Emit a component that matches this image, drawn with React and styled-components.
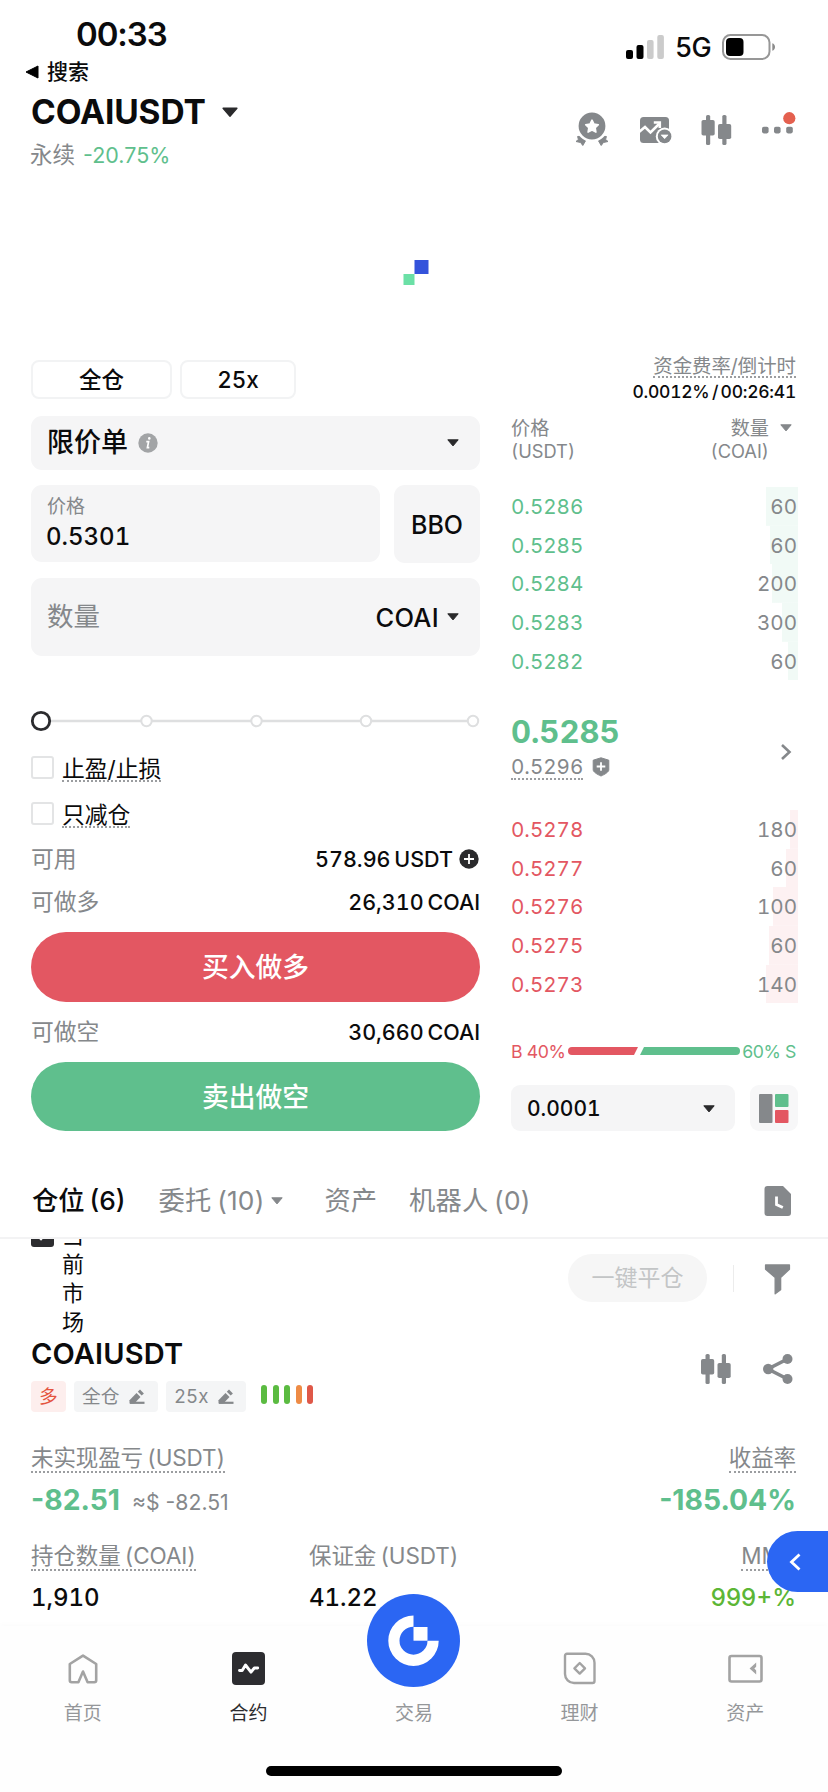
import React from 'react';
import styled, { createGlobalStyle, css } from 'styled-components';

const GREEN = '#5fbf8d';
const RED = '#e35762';
const GRAY = '#85888b';
const PANEL = '#f5f5f6';

const GlobalStyle = createGlobalStyle`
  * { box-sizing: border-box; }
  html, body { margin: 0; padding: 0; background: #fff; }
  body {
    font-family: Inter, "Noto Sans CJK SC", sans-serif;
    font-variant-numeric: tabular-nums;
    color: #0b0b0c;
    white-space: nowrap;
    word-spacing: -2px;
  }
  svg { display: block; flex: none; overflow: visible; }
`;

const Screen = styled.main`
  position: relative;
  width: 828px;
  height: 1792px;
  overflow: hidden;
  background: #fff;
  display: flex;
  flex-direction: column;
`;

/* ---------- status bar ---------- */
const StatusBar = styled.div`
  height: 60px;
  flex: none;
  display: flex;
  justify-content: space-between;
  align-items: flex-start;
  padding: 14px 52px 0 76px;
`;
const Clock = styled.div`
  font-size: 33px;
  font-weight: 600;
  line-height: 40px;
  letter-spacing: -1.1px;
  font-variant-numeric: normal;
`;
const StatusRight = styled.div`
  display: flex;
  align-items: center;
  height: 26px;
  margin-top: 20px;
`;
const Network = styled.span`
  font-size: 27px;
  font-weight: 500;
  line-height: 26px;
  margin: 2px 11px 0 10px;
  letter-spacing: -0.8px;
`;
const BackLink = styled.div`
  height: 24px;
  flex: none;
  padding-left: 25px;
  display: flex;
  align-items: center;
  gap: 8px;
  font-size: 21px;
  font-weight: 500;
  line-height: 24px;
`;

/* ---------- header ---------- */
const Header = styled.header`
  height: 96px;
  flex: none;
  display: flex;
  justify-content: space-between;
  padding: 7px 31px 0 31px;
`;
const PairTitle = styled.h1`
  margin: 0;
  height: 42px;
  line-height: 42px;
  font-size: 33.5px;
  font-weight: 700;
  letter-spacing: -0.1px;
  display: flex;
  align-items: center;
  gap: 16px;
`;
const PairSub = styled.div`
  margin: 8px 0 0 -1px;
  line-height: 28px;
  font-size: 22.5px;
  color: ${GRAY};
  display: flex;
  gap: 8px;
`;
const Change = styled.span`
  color: ${GREEN};
  font-size: 21.5px;
  font-variant-numeric: normal;
`;
const HeaderIcons = styled.div`
  display: flex;
  gap: 26px;
  height: 36px;
  margin-top: 19px;
`;

const ChartLoading = styled.div`
  height: 162px;
  flex: none;
  display: flex;
  justify-content: center;
  padding: 80px 0 0 3px;
`;

/* ---------- trade panel ---------- */
const Trade = styled.section`
  height: 789px;
  flex: none;
  display: grid;
  grid-template-columns: 449px 1fr;
  column-gap: 31px;
  padding: 0 32px 0 31px;
`;
const OrderForm = styled.div`
  padding-top: 18px;
`;
const MarginRow = styled.div`
  display: flex;
  gap: 8px;
`;
const OutlineButton = styled.div`
  width: ${(p) => p.$w}px;
  height: 39px;
  border: 2px solid #f2f3f4;
  border-radius: 8px;
  font-size: 22.5px;
  font-weight: 500;
  line-height: 36px;
  text-align: center;
`;
const Field = styled.div`
  height: ${(p) => p.$h}px;
  border-radius: 11px;
  background: ${PANEL};
  display: flex;
  align-items: center;
  padding: 0 21px 0 16px;
  flex: ${(p) => (p.$grow ? 1 : 'none')};
  margin-top: ${(p) => p.$mt || 0}px;
`;
const FieldRow = styled.div`
  display: flex;
  gap: 14px;
  margin-top: 15px;
`;
const OrderType = styled.span`
  font-size: 27px;
  font-weight: 500;
  line-height: 36px;
  margin-right: 10px;
`;
const Push = styled.span`
  flex: 1;
`;
const PriceStack = styled.div`
  display: flex;
  flex-direction: column;
`;
const PriceLabel = styled.span`
  font-size: 19px;
  line-height: 26px;
  color: ${GRAY};
`;
const PriceValue = styled.span`
  font-size: 24px;
  font-weight: 500;
  line-height: 33px;
  margin-left: -1px;
`;
const BboButton = styled.div`
  width: 86px;
  height: 78px;
  border-radius: 11px;
  background: ${PANEL};
  font-size: 25px;
  font-weight: 500;
  line-height: 80px;
  text-align: center;
`;
const Placeholder = styled.span`
  font-size: 26.5px;
  line-height: 36px;
  margin-bottom: 2px;
  color: ${GRAY};
`;
const Unit = styled.span`
  font-size: 25.5px;
  font-weight: 500;
  letter-spacing: 0.3px;
  margin-right: 8px;
`;
const Slider = styled.div`
  margin-top: 54px;
  height: 22px;
`;
const CheckRow = styled.div`
  display: flex;
  height: 26px;
  margin-top: ${(p) => p.$mt}px;
  gap: 8px;
`;
const CheckBox = styled.span`
  width: 23px;
  height: 23px;
  border: 2px solid #e3e4e5;
  border-radius: 3px;
`;
const dotted = css`
  border-bottom: 2px dotted #9b9da0;
`;
const CheckLabel = styled.span`
  font-size: 22.8px;
  line-height: 25px;
  height: 26px;
  ${dotted}
`;
const InfoRow = styled.div`
  display: flex;
  align-items: center;
  height: 32px;
  margin-top: ${(p) => p.$mt}px;
  font-size: 21.5px;
  font-weight: 500;
`;
const InfoLabel = styled.span`
  flex: 1;
  font-size: 22.8px;
  line-height: 30px;
  font-weight: 400;
  color: ${GRAY};
`;
const ActionButton = styled.div`
  height: ${(p) => p.$h}px;
  margin-top: 14px;
  border-radius: 35px;
  background: ${(p) => p.$bg};
  color: #fff;
  font-size: 26.8px;
  font-weight: 500;
  line-height: 70px;
  text-align: center;
`;

/* ---------- order book ---------- */
const Book = styled.div`
  padding-top: 14px;
  display: flex;
  flex-direction: column;
`;
const Funding = styled.div`
  align-self: flex-end;
  height: 22px;
  font-size: 19.4px;
  line-height: 21px;
  color: ${GRAY};
  ${dotted}
`;
const FundingValue = styled.div`
  align-self: flex-end;
  height: 22px;
  margin-top: 3px;
  font-size: 17.5px;
  font-weight: 500;
  line-height: 22px;
  letter-spacing: -0.25px;
`;
const BookHead = styled.div`
  display: flex;
  margin-top: 13px;
  height: 49px;
  line-height: 24px;
  color: ${GRAY};
`;
const HeadCell = styled.div`
  text-align: ${(p) => (p.$right ? 'right' : 'left')};
  flex: ${(p) => (p.$right ? 'none' : 1)};
`;
const HeadLine = styled.div`
  height: 24px;
  font-size: ${(p) => (p.$cjk ? 19.2 : 18.3)}px;
  line-height: ${(p) => (p.$cjk ? 24 : 23)}px;
`;
const HeadCaret = styled.div`
  padding: 8px 4px 0 11px;
`;
const Levels = styled.div`
  margin: ${(p) => p.$mt}px -2px 0 0;
`;
const Level = styled.div`
  height: 38.7px;
  line-height: 39.5px;
  padding-right: 1px;
  display: flex;
  justify-content: space-between;
  font-size: 20.6px;
  color: ${GRAY};
  background: linear-gradient(${(p) => p.$tint}, ${(p) => p.$tint}) no-repeat right / ${(p) => p.$depth}px 100%;
`;
const LevelPrice = styled.span`
  color: ${(p) => p.$color};
`;
const Mid = styled.div`
  height: 129.5px;
  padding: 33px 4px 0 0;
  display: flex;
  justify-content: space-between;
`;
const LastPrice = styled.div`
  font-size: 31px;
  font-weight: 700;
  line-height: 38px;
  color: ${GREEN};
`;
const MarkRow = styled.div`
  display: flex;
  gap: 9px;
  margin-top: 3px;
`;
const MarkPrice = styled.span`
  font-size: 20.6px;
  line-height: 25px;
  height: 26px;
  color: ${GRAY};
  ${dotted}
`;
const Shield = styled.span`
  padding-top: 3px;
`;
const MidArrow = styled.div`
  padding-top: 30px;
`;
const Ratio = styled.div`
  display: flex;
  align-items: center;
  justify-content: space-between;
  height: 24px;
  margin-top: 36px;
  font-size: 17.7px;
  letter-spacing: -0.4px;
  word-spacing: 0;
  font-variant-numeric: normal;
`;
const RatioText = styled.span`
  color: ${(p) => p.$color};
`;
const BookFoot = styled.div`
  display: flex;
  gap: 15px;
  margin: 22px -2px 0 0;
`;
const StepSelect = styled.div`
  width: 224px;
  height: 46px;
  border-radius: 9px;
  background: ${PANEL};
  display: flex;
  align-items: center;
  padding: 1px 20px 0 16px;
  font-size: 21px;
  font-weight: 500;
`;
const LayoutButton = styled.div`
  width: 48px;
  height: 46px;
  border-radius: 9px;
  background: #f7f7f8;
  padding: 9px 0 0 9px;
`;

/* ---------- tabs ---------- */
const Tabs = styled.nav`
  height: 108px;
  flex: none;
  padding: 34px 36px 0 32px;
  border-bottom: 2px solid #f3f3f4;
  display: flex;
  align-items: center;
`;
const Tab = styled.span`
  font-size: 26.3px;
  line-height: 36px;
  margin-bottom: 1px;
  font-weight: ${(p) => (p.$active ? 500 : 400)};
  color: ${(p) => (p.$active ? '#0b0b0c' : GRAY)};
  margin-right: ${(p) => p.$mr || 0}px;
  font-variant-numeric: normal;
  letter-spacing: ${(p) => p.$ls || 0}px;
  display: flex;
  align-items: center;
  gap: 7px;
`;

/* ---------- positions ---------- */
const Positions = styled.section`
  height: 387px;
  flex: none;
  overflow: hidden;
  padding: 0 32px 0 31px;
`;
const FilterRow = styled.div`
  height: 98px;
  overflow: hidden;
  display: flex;
`;
const MarketToggle = styled.div`
  display: flex;
  flex: 1;
  gap: 8px;
  margin-top: -18px;
`;
const CheckedBox = styled.span`
  width: 23px;
  height: 23px;
  margin-top: 3px;
  border-radius: 3px;
  background: #2c2c2f;
  padding: 4px 0 0 3px;
`;
const MarketLabel = styled.span`
  width: 23px;
  font-size: 22px;
  line-height: 29px;
  white-space: normal;
  word-break: break-all;
`;
const CloseAll = styled.div`
  width: 139px;
  height: 48px;
  margin-top: 15px;
  border-radius: 24px;
  background: #f6f6f6;
  color: #c3c5c6;
  font-size: 23px;
  line-height: 48px;
  text-align: center;
`;
const Divider = styled.span`
  width: 1px;
  height: 27px;
  margin: 26px 30px 0 26px;
  background: #ececec;
`;
const FunnelWrap = styled.div`
  padding: 25px 5px 0 0;
`;
const PositionHead = styled.div`
  display: flex;
  justify-content: space-between;
  height: 75px;
`;
const Symbol = styled.h2`
  margin: 0;
  font-size: 29px;
  font-weight: 600;
  line-height: 33px;
  height: 34px;
  letter-spacing: 0.15px;
`;
const Tags = styled.div`
  display: flex;
  gap: 8px;
  margin-top: 10px;
  height: 31px;
`;
const Tag = styled.span`
  width: ${(p) => p.$w}px;
  height: 31px;
  border-radius: 4px;
  background: ${(p) => (p.$long ? '#fdeeed' : '#f4f5f6')};
  color: ${(p) => (p.$long ? '#e4543f' : GRAY)};
  font-size: 18.7px;
  line-height: 31px;
  display: flex;
  align-items: center;
  padding-left: 8px;
  gap: 10px;
`;
const RiskBars = styled.span`
  display: flex;
  gap: 5.6px;
  padding: 4px 0 0 7px;
`;
const RiskBar = styled.i`
  width: 6px;
  height: 19px;
  border-radius: 3px;
  background: ${(p) => p.$c};
`;
const PositionIcons = styled.div`
  display: flex;
  gap: 32px;
  padding: 17px 3px 0 0;
`;
const Stats = styled.div`
  display: flex;
  justify-content: space-between;
  margin-top: ${(p) => p.$mt}px;
`;
const Stat = styled.div`
  display: flex;
  flex-direction: column;
  align-items: ${(p) => (p.$right ? 'flex-end' : 'flex-start')};
  width: ${(p) => (p.$w ? p.$w + 'px' : 'auto')};
  flex: ${(p) => (p.$grow ? 1 : 'none')};
`;
const StatLabel = styled.span`
  font-size: 22.5px;
  line-height: 26px;
  height: 28px;
  color: ${GRAY};
  letter-spacing: -0.1px;
  border-bottom: 2px dotted ${(p) => (p.$plain ? 'transparent' : '#9b9da0')};
`;
const Pnl = styled.div`
  display: flex;
  align-items: baseline;
  gap: 12px;
  height: 34px;
  margin-top: 10px;
  font-size: 28.3px;
  font-weight: 700;
  line-height: 34px;
  font-variant-numeric: normal;
  color: ${GREEN};
`;
const PnlApprox = styled.span`
  font-size: 21.2px;
  font-weight: 400;
  word-spacing: 0;
  color: ${GRAY};
`;
const StatValue = styled.span`
  font-size: 24px;
  font-weight: 500;
  line-height: 30px;
  margin-top: 12px;
  color: ${(p) => p.$color || '#0b0b0c'};
  font-variant-numeric: ${(p) => (p.$color ? 'normal' : 'tabular-nums')};
`;

const SideTab = styled.div`
  position: absolute;
  right: 0;
  top: 1531px;
  width: 61px;
  height: 61px;
  border-radius: 31px 0 0 31px;
  background: #2b66f3;
  padding: 22px 0 0 21px;
`;

/* ---------- bottom nav ---------- */
const BottomNav = styled.nav`
  height: 166px;
  flex: none;
  background: #fefefe;
  box-shadow: 0 -1px 6px rgba(0, 0, 0, 0.025);
  position: relative;
  display: flex;
  flex-direction: column;
  align-items: center;
`;
const NavItems = styled.div`
  width: 100%;
  height: 140px;
  display: grid;
  grid-template-columns: repeat(5, 1fr);
`;
const NavItem = styled.div`
  display: flex;
  flex-direction: column;
  align-items: center;
  font-size: 19px;
  color: ${(p) => (p.$active ? '#2c2c2f' : '#95979a')};
`;
const NavIcon = styled.div`
  height: 75px;
  display: flex;
  align-items: flex-end;
  padding-bottom: ${(p) => (p.$big ? 14 : 16.5)}px;
`;
const TradeButton = styled.div`
  width: 93px;
  height: 93px;
  border-radius: 50%;
  background: #2b66f3;
  flex: none;
`;
const NavText = styled.span`
  line-height: 26px;
`;
const HomeIndicator = styled.div`
  width: 296px;
  height: 10px;
  border-radius: 5px;
  background: #000;
`;

/* ---------- icons ---------- */
const Caret = ({ w = 12, h = 8, color = '#2a2a2c' }) => (
  <svg width={w} height={h} viewBox="0 0 12 8">
    <path d="M.8.8h10.4L6 6.9z" fill={color} stroke={color} strokeLinejoin="round" />
  </svg>
);

const SignalIcon = () => (
  <svg width="39" height="26" viewBox="0 0 39 26">
    <rect x="0" y="16" width="7" height="9" rx="2" fill="#000" />
    <rect x="10.5" y="11" width="7" height="14" rx="2" fill="#000" />
    <rect x="21" y="6" width="6.6" height="19" rx="2" fill="#cbcbcb" />
    <rect x="31.3" y="1" width="6.6" height="24" rx="2" fill="#cbcbcb" />
  </svg>
);

const BatteryIcon = () => (
  <svg width="54" height="26" viewBox="0 0 54 26">
    <rect x="1" y="1" width="46.5" height="24" rx="7.5" fill="none" stroke="#979797" strokeWidth="2" />
    <rect x="4" y="4" width="17.5" height="18" rx="4" fill="#000" />
    <path d="M50.3 9.2c3.6 1.2 3.6 6.4 0 7.6z" fill="#8b8b8b" />
  </svg>
);

const MedalIcon = () => (
  <svg width="34" height="36" viewBox="0 0 34 36">
    <path d="M2.6 26.5l4-.3 4 4.5-2.8 4.8-2.2-3-4.6-1 2.4-2z" fill={GRAY} stroke={GRAY} strokeLinejoin="round" />
    <path d="M31.4 26.5l-4-.3-4 4.5 2.8 4.8 2.2-3 4.6-1-2.4-2z" fill={GRAY} stroke={GRAY} strokeLinejoin="round" />
    <circle cx="17" cy="16" r="14.7" fill={GRAY} stroke="#fff" strokeWidth="2.6" />
    <path
      d="M17 10.2l2 3.9 4.3.6-3.1 3.1.7 4.3-3.9-2-3.9 2 .7-4.3-3.1-3.1 4.3-.6z"
      fill="#fff" stroke="#fff" strokeWidth="1.6" strokeLinejoin="round"
    />
  </svg>
);

const ChartIcon = () => (
  <svg width="34" height="36" viewBox="0 0 34 36">
    <rect x="1" y="7" width="29" height="26" rx="3.5" fill={GRAY} />
    <path d="M0 22l6-5 5.5 5.5 8.5-8.500" fill="none" stroke="#fff" strokeWidth="2.6" />
    <path d="M14.8 12.5h6v5.500" fill="none" stroke="#fff" strokeWidth="2.6" />
    <circle cx="25.6" cy="26.4" r="8.8" fill="#fff" />
    <circle cx="25.6" cy="26.4" r="6.8" fill={GRAY} />
    <path d="M22.1 24.9h7l-3.5 3.800z" fill="#fff" stroke="#fff" strokeWidth=".6" strokeLinejoin="round" />
  </svg>
);

const CandlesIcon = () => (
  <svg width="30" height="30" viewBox="0 0 30 30" fill={GRAY}>
    <rect x="4.5" y="0" width="4.2" height="30" rx="1.6" />
    <rect x="0" y="5" width="13.2" height="15.5" rx="1.8" />
    <rect x="20.8" y="0" width="4.2" height="30" rx="1.6" />
    <rect x="16.5" y="9" width="13.2" height="15" rx="1.8" />
  </svg>
);

const MoreIcon = () => (
  <svg width="36" height="36" viewBox="0 0 36 36" fill={GRAY}>
    <rect x="1" y="16.8" width="6.6" height="6.6" rx="1.8" />
    <rect x="13" y="16.8" width="6.6" height="6.6" rx="1.8" />
    <rect x="25.2" y="16.8" width="6.6" height="6.6" rx="1.8" />
    <circle cx="28.3" cy="8.2" r="6.1" fill="#e4604f" />
  </svg>
);

const InfoIcon = () => (
  <svg width="20" height="20" viewBox="0 0 20 20">
    <circle cx="10" cy="10" r="9.7" fill="#a2a4a6" />
    <circle cx="11.3" cy="5.4" r="1.3" fill="#fff" />
    <path d="M8.3 8.7h2.3L9.4 14.6h1.9" fill="none" stroke="#fff" strokeWidth="1.7" />
  </svg>
);

const SliderTrack = () => (
  <svg width="449" height="22" viewBox="0 0 449 22">
    <path d="M20 11h423" stroke="#dedfe0" strokeWidth="2.5" />
    {[115.5, 225.5, 335, 442].map((x) => (
      <circle key={x} cx={x} cy="11" r="5.2" fill="#fff" stroke="#dedfe0" strokeWidth="2" />
    ))}
    <circle cx="10" cy="11" r="8.7" fill="#fff" stroke="#2b2b2e" strokeWidth="2.8" />
  </svg>
);

const PlusCircle = () => (
  <svg width="20" height="20" viewBox="0 0 20 20">
    <circle cx="10" cy="10" r="9.7" fill="#2a2a2c" />
    <path d="M10 5v10M5 10h10" stroke="#fff" strokeWidth="1.8" />
  </svg>
);

const ShieldPlus = () => (
  <svg width="18" height="20" viewBox="0 0 18 20">
    <path d="M9 .8l7.8 2.4v9.6c0 2.2-4 4.6-7.8 6.2-3.8-1.6-7.8-4-7.8-6.2V3.2z" fill={GRAY} stroke={GRAY} strokeLinejoin="round" />
    <path d="M9 5.2v8.6M4.7 9.5h8.6" stroke="#fff" strokeWidth="1.8" />
  </svg>
);

const RatioBar = () => (
  <svg width="172" height="8" viewBox="0 0 172 8">
    <path d="M4 0h66l-4 8H4a4 4 0 010-8z" fill={RED} />
    <path d="M76 0h92a4 4 0 010 8H72z" fill={GREEN} />
  </svg>
);

const BookLayoutIcon = () => (
  <svg width="30" height="29" viewBox="0 0 30 29">
    <rect width="13.5" height="29" rx="1" fill={GRAY} />
    <rect x="16" width="13.5" height="13" rx="1" fill={GREEN} />
    <rect x="16" y="16" width="13.5" height="13" rx="1" fill={RED} />
  </svg>
);

const HistoryIcon = () => (
  <svg width="28" height="32" viewBox="0 0 28 32">
    <path d="M3.5 1h15.5l8 8v19a3 3 0 01-3 3H3.5a3 3 0 01-3-3V4a3 3 0 013-3z" fill={GRAY} />
    <path d="M12.5 11.5v8l6.3 3" fill="none" stroke="#fff" strokeWidth="2.8" />
  </svg>
);

const FunnelIcon = () => (
  <svg width="27" height="31" viewBox="0 0 27 31">
    <path d="M1.6 1h23.8v4.2l-8.8 8.3v12.3l-5.4 4V13.5L1.6 5.2z" fill={GRAY} stroke={GRAY} strokeWidth="1.4" strokeLinejoin="round" />
  </svg>
);

const ShareIcon = () => (
  <svg width="30" height="30" viewBox="0 0 30 30" fill={GRAY}>
    <path d="M24.5 5L5 15l19.5 10" fill="none" stroke={GRAY} strokeWidth="3.6" />
    <circle cx="24.5" cy="5" r="5" />
    <circle cx="5.2" cy="15" r="5.2" />
    <circle cx="24.5" cy="25" r="5" />
  </svg>
);

const EditIcon = () => (
  <svg width="16" height="16" viewBox="0 0 16 16" fill={GRAY}>
    <path d="M.5 11.2L7.5 4l4 3.9-6.2 6.600H.5z" />
    <path d="M8.8 2.7L11 .5l3.9 3.9-2.2 2.200z" />
    <path d="M1 12.7h14.5v2.200H1z" />
  </svg>
);

const HomeIcon = () => (
  <svg width="32" height="32" viewBox="0 0 32 32" fill="none" stroke="#a3a3a3" strokeWidth="2.6" strokeLinejoin="round">
    <path d="M16 2.6L2.8 11v16.2a2 2 0 002 2h6.6L16 18.5l4.6 10.7h6.6a2 2 0 002-2V11z" />
  </svg>
);

const FuturesIcon = () => (
  <svg width="33" height="33" viewBox="0 0 33 33">
    <rect width="33" height="33" rx="4" fill="#2d2d30" />
    <path d="M7.5 18.5h2.7l3.3-5.5 5.5 7.2 3.3-4.2h3.4" fill="none" stroke="#fff" strokeWidth="2.9" strokeLinejoin="round" strokeLinecap="round" />
  </svg>
);

const TradeLogo = () => (
  <svg width="93" height="93" viewBox="0 0 93 93" fill="#fff">
    <path d="M46.5 21.5a25.2 25.2 0 1025.2 25.2H60.5a14 14 0 11-14-14z" />
    <rect x="46.5" y="33" width="14" height="13.7" />
  </svg>
);

const EarnIcon = () => (
  <svg width="33" height="33" viewBox="0 0 33 33" fill="none" stroke="#a3a3a3" strokeWidth="2.4">
    <path d="M4 1.7h18.5a9 9 0 019 9V29a2 2 0 01-2 2H11a9 9 0 01-9-9V3.7a2 2 0 012-2z" />
    <path d="M16.7 11l5.3 5.3-5.3 5.3-5.3-5.3z" strokeLinejoin="round" />
  </svg>
);

const WalletIcon = () => (
  <svg width="35" height="33" viewBox="0 0 35 33">
    <rect x="1.5" y="4" width="32" height="25.5" rx="2" fill="none" stroke="#a3a3a3" strokeWidth="2.6" />
    <path d="M28.2 10.6v12l-6.600-6z" fill="#a3a3a3" />
    <path d="M28.8 14.3v4.600l-2.500-2.300z" fill="#fff" />
  </svg>
);

const asks = [
  ['0.5286', '60', 32],
  ['0.5285', '60', 28],
  ['0.5284', '200', 26],
  ['0.5283', '300', 16],
  ['0.5282', '60', 10],
];
const bids = [
  ['0.5278', '180', 8],
  ['0.5277', '60', 12],
  ['0.5276', '100', 25],
  ['0.5275', '60', 29],
  ['0.5273', '140', 32],
];

export default function App() {
  return (
    <Screen>
      <GlobalStyle />
      <StatusBar>
        <Clock>00:33</Clock>
        <StatusRight>
          <SignalIcon />
          <Network>5G</Network>
          <BatteryIcon />
        </StatusRight>
      </StatusBar>
      <BackLink>
        <svg width="14" height="14" viewBox="0 0 14 14">
          <path d="M13 1v12L1 7z" stroke="#000" strokeLinejoin="round" />
        </svg>
        搜索
      </BackLink>

      <Header>
        <div>
          <PairTitle>
            COAIUSDT
            <Caret w={16} h={11} />
          </PairTitle>
          <PairSub>
            永续<Change>-20.75%</Change>
          </PairSub>
        </div>
        <HeaderIcons>
          <svg width="38" height="36" viewBox="0 0 38 36">
            <MedalIcon />
          </svg>
          <ChartIcon />
          <svg width="36" height="36" viewBox="0 0 36 36">
            <g transform="translate(2.5 5)"><CandlesIcon /></g>
          </svg>
          <MoreIcon />
        </HeaderIcons>
      </Header>

      <ChartLoading>
        <svg width="26" height="26" viewBox="0 0 26 26">
          <rect x="11.5" y="0" width="14" height="14" fill="#3453db" />
          <rect x="0.5" y="14" width="11" height="11" fill="#6be0a6" />
        </svg>
      </ChartLoading>

      <Trade>
        <OrderForm>
          <MarginRow>
            <OutlineButton $w={141}>全仓</OutlineButton>
            <OutlineButton $w={116}>25x</OutlineButton>
          </MarginRow>
          <Field $h={54} $mt={17}>
            <OrderType>限价单</OrderType>
            <InfoIcon />
            <Push />
            <Caret />
          </Field>
          <FieldRow>
            <Field $h={77} $grow>
              <PriceStack>
                <PriceLabel>价格</PriceLabel>
                <PriceValue>0.5301</PriceValue>
              </PriceStack>
            </Field>
            <BboButton>BBO</BboButton>
          </FieldRow>
          <Field $h={78} $mt={15}>
            <Placeholder>数量</Placeholder>
            <Push />
            <Unit>COAI</Unit>
            <Caret />
          </Field>
          <Slider><SliderTrack /></Slider>
          <CheckRow $mt={24}>
            <CheckBox />
            <CheckLabel>止盈/止损</CheckLabel>
          </CheckRow>
          <CheckRow $mt={20}>
            <CheckBox />
            <CheckLabel>只减仓</CheckLabel>
          </CheckRow>
          <InfoRow $mt={15}>
            <InfoLabel>可用</InfoLabel>
            <span>578.96 USDT</span>
            <svg width="27" height="20" viewBox="0 0 27 20">
              <g transform="translate(6 0)"><PlusCircle /></g>
            </svg>
          </InfoRow>
          <InfoRow $mt={11}>
            <InfoLabel>可做多</InfoLabel>26,310 COAI
          </InfoRow>
          <ActionButton $bg={RED} $h={70}>买入做多</ActionButton>
          <InfoRow $mt={14}>
            <InfoLabel>可做空</InfoLabel>30,660 COAI
          </InfoRow>
          <ActionButton $bg={GREEN} $h={69}>卖出做空</ActionButton>
        </OrderForm>

        <Book>
          <Funding>资金费率/倒计时</Funding>
          <FundingValue>0.0012% / 00:26:41</FundingValue>
          <BookHead>
            <HeadCell>
              <HeadLine $cjk>价格</HeadLine>
              <HeadLine>(USDT)</HeadLine>
            </HeadCell>
            <HeadCell $right>
              <HeadLine $cjk>数量</HeadLine>
              <HeadLine>(COAI)</HeadLine>
            </HeadCell>
            <HeadCaret><Caret color={GRAY} /></HeadCaret>
          </BookHead>
          <Levels $mt={22}>
            {asks.map(([price, qty, depth]) => (
              <Level key={price} $tint="#f1faf6" $depth={depth}>
                <LevelPrice $color={GREEN}>{price}</LevelPrice>
                <span>{qty}</span>
              </Level>
            ))}
          </Levels>
          <Mid>
            <div>
              <LastPrice>0.5285</LastPrice>
              <MarkRow>
                <MarkPrice>0.5296</MarkPrice>
                <Shield><ShieldPlus /></Shield>
              </MarkRow>
            </div>
            <MidArrow>
              <svg width="12" height="18" viewBox="0 0 12 18">
                <path d="M2 2l7.5 7L2 16" fill="none" stroke={GRAY} strokeWidth="2.6" />
              </svg>
            </MidArrow>
          </Mid>
          <Levels $mt={0}>
            {bids.map(([price, qty, depth]) => (
              <Level key={price} $tint="#fdf1f2" $depth={depth}>
                <LevelPrice $color={RED}>{price}</LevelPrice>
                <span>{qty}</span>
              </Level>
            ))}
          </Levels>
          <Ratio>
            <RatioText $color={RED}>B 40%</RatioText>
            <RatioBar />
            <RatioText $color={GREEN}>60% S</RatioText>
          </Ratio>
          <BookFoot>
            <StepSelect>
              0.0001
              <Push />
              <Caret />
            </StepSelect>
            <LayoutButton><BookLayoutIcon /></LayoutButton>
          </BookFoot>
        </Book>
      </Trade>

      <Tabs>
        <Tab $active $mr={33}>仓位 (6)</Tab>
        <Tab $mr={41} $ls={0.2}>委托 (10)<Caret color={GRAY} /></Tab>
        <Tab $mr={32}>资产</Tab>
        <Tab $ls={0.2}>机器人 (0)</Tab>
        <Push />
        <HistoryIcon />
      </Tabs>

      <Positions>
        <FilterRow>
          <MarketToggle>
            <CheckedBox>
              <svg width="17" height="13" viewBox="0 0 17 13">
                <path d="M1 5l6 6 8-9" fill="none" stroke="#fff" strokeWidth="2.5" />
              </svg>
            </CheckedBox>
            <MarketLabel>当前市场</MarketLabel>
          </MarketToggle>
          <CloseAll>一键平仓</CloseAll>
          <Divider />
          <FunnelWrap><FunnelIcon /></FunnelWrap>
        </FilterRow>

        <PositionHead>
          <div>
            <Symbol>COAIUSDT</Symbol>
            <Tags>
              <Tag $long $w={35}>多</Tag>
              <Tag $w={84}>全仓<EditIcon /></Tag>
              <Tag $w={80}>25x<EditIcon /></Tag>
              <RiskBars>
                <RiskBar $c="#5bbb41" />
                <RiskBar $c="#5bbb41" />
                <RiskBar $c="#5bbb41" />
                <RiskBar $c="#ee8b45" />
                <RiskBar $c="#df5848" />
              </RiskBars>
            </Tags>
          </div>
          <PositionIcons>
            <CandlesIcon />
            <ShareIcon />
          </PositionIcons>
        </PositionHead>

        <Stats $mt={33}>
          <Stat>
            <StatLabel>未实现盈亏 (USDT)</StatLabel>
            <Pnl>-82.51<PnlApprox>≈$ -82.51</PnlApprox></Pnl>
          </Stat>
          <Stat $right>
            <StatLabel>收益率</StatLabel>
            <Pnl>-185.04%</Pnl>
          </Stat>
        </Stats>
        <Stats $mt={26}>
          <Stat $w={278}>
            <StatLabel>持仓数量 (COAI)</StatLabel>
            <StatValue>1,910</StatValue>
          </Stat>
          <Stat $grow>
            <StatLabel $plain>保证金 (USDT)</StatLabel>
            <StatValue>41.22</StatValue>
          </Stat>
          <Stat $right>
            <StatLabel>MMR</StatLabel>
            <StatValue $color="#5cb636">999+%</StatValue>
          </Stat>
        </Stats>
      </Positions>

      <BottomNav>
        <NavItems>
          <NavItem>
            <NavIcon><HomeIcon /></NavIcon>
            <NavText>首页</NavText>
          </NavItem>
          <NavItem $active>
            <NavIcon><FuturesIcon /></NavIcon>
            <NavText>合约</NavText>
          </NavItem>
          <NavItem>
            <NavIcon $big><TradeButton><TradeLogo /></TradeButton></NavIcon>
            <NavText>交易</NavText>
          </NavItem>
          <NavItem>
            <NavIcon><EarnIcon /></NavIcon>
            <NavText>理财</NavText>
          </NavItem>
          <NavItem>
            <NavIcon><WalletIcon /></NavIcon>
            <NavText>资产</NavText>
          </NavItem>
        </NavItems>
        <HomeIndicator />
      </BottomNav>

      <SideTab>
        <svg width="14" height="18" viewBox="0 0 14 18">
          <path d="M11.5 1.5L3.5 9l8 7.500" fill="none" stroke="#fff" strokeWidth="2.8" />
        </svg>
      </SideTab>
    </Screen>
  );
}
